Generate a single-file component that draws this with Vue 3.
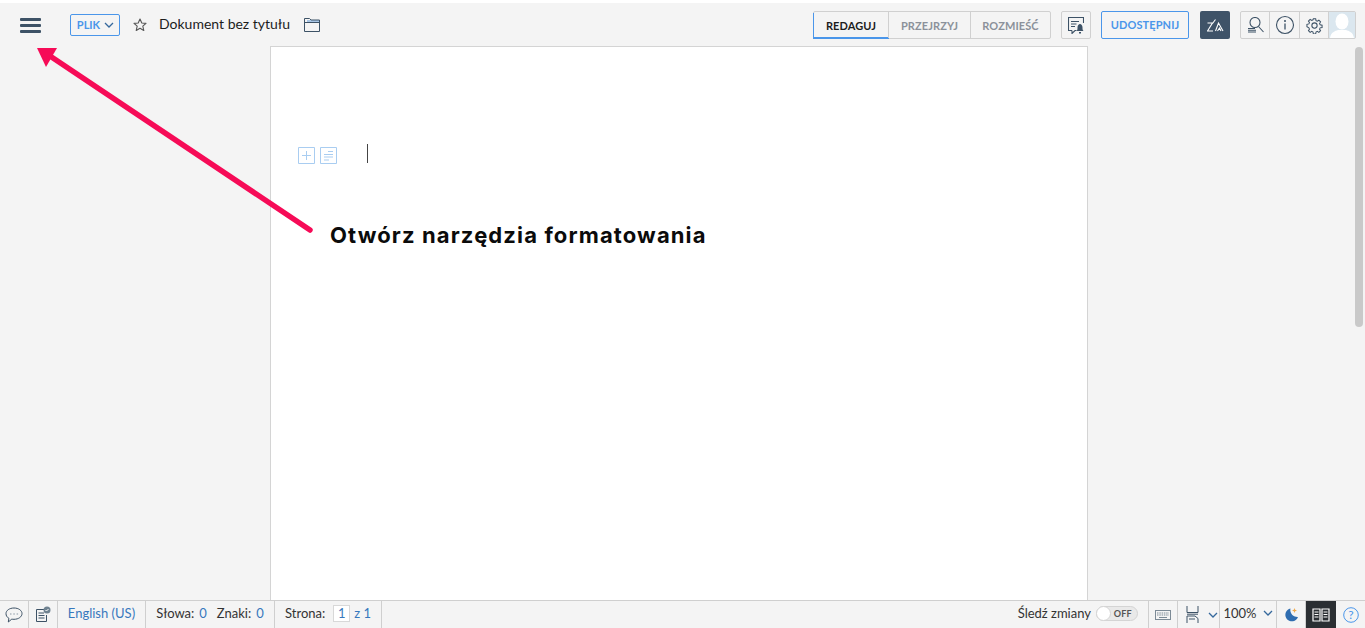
<script setup>
const tabs = [
  { label: 'REDAGUJ', w: 74, active: true },
  { label: 'PRZEJRZYJ', w: 82 },
  { label: 'ROZMIEŚĆ', w: 80 }
]
</script>

<template>
  <div class="app">
    <header class="toolbar">
      <button class="burger" aria-label="menu"><i></i><i></i><i></i></button>
      <button class="file"><span class="lift">PLIK</span>
        <svg width="10" height="6" viewBox="0 0 10 6"><path d="M1 1l4 4 4-4" fill="none" stroke="#35689c" stroke-width="1.3"/></svg>
      </button>
      <svg class="star" width="16" height="16" viewBox="0 0 16 16"><path d="M8 2l1.800 4 4.200.4-3.200 2.800 1 4.300L8 11.200l-3.800 2.300 1-4.300L2 6.400 6.200 6z" fill="none" stroke="#555" stroke-width="1.100" stroke-linejoin="round"/></svg>
      <span class="title">Dokument bez tytułu</span>
      <svg class="folder" width="16" height="14" viewBox="0 0 16 14"><rect x="3" y="2" width="12" height="2.500" fill="#a9c6e6"/><path d="M.5 13.500V.5h5l1.500 1.500h8.500v11.500zM.5 4.500h15" fill="none" stroke="#3d5266"/></svg>
      <div class="spacer"></div>
      <nav class="tabs">
        <span v-for="t in tabs" :key="t.label" class="tab" :class="{ active: t.active }" :style="{ width: t.w + 'px' }">{{ t.label }}</span>
      </nav>
      <button class="box" aria-label="powiadomienia">
        <svg width="16" height="17" viewBox="0 0 16 17"><path d="M4 13.500H.5V.5h15v5.500M4 13.500v3l3-3h1.500" fill="none" stroke="#3d5266" stroke-width="1.100"/><path d="M3 4.500h8M3 7h5.500M3 9.500h4" stroke="#3d5266"/><path d="M8.500 14c1-1 1-2 1-3.500C9.500 8.500 10.800 7 12 7s2.500 1.500 2.500 3.500c0 1.500 0 2.500 1 3.500zM11 15h2v1.500h-2z" fill="#3d5266"/></svg>
      </button>
      <button class="share"><span class="lift">UDOSTĘPNIJ</span></button>
      <button class="dark" aria-label="język">
        <svg width="17" height="13" viewBox="0 0 17 13"><path d="M.5 4h5L.5 12H6M5.500 4.500L8.500 .5M8.500 12l3-8 4.500 8M10.500 12l2-3 1.500 3" fill="none" stroke="#fff" stroke-width="1.100"/></svg>
      </button>
      <div class="group">
        <span class="cell c1"><svg width="17" height="16" viewBox="0 0 17 16"><circle cx="8" cy="5.500" r="5" fill="none" stroke="#3d5266" stroke-width="1.100"/><path d="M11.500 9.500l5 5.500M1 11.500h7M1 13.300h8M1 15h8" stroke="#3d5266" stroke-width="1.100"/></svg></span>
        <span class="cell c2"><svg width="20" height="20" viewBox="0 0 20 20"><circle cx="10" cy="10" r="8.500" fill="none" stroke="#3d5266" stroke-width="1.100"/><path d="M10 8.500v6" stroke="#3d5266" stroke-width="1.300"/><circle cx="10" cy="6" r="1" fill="#3d5266"/></svg></span>
        <span class="cell c3"><svg width="17" height="17" viewBox="0 0 18 18"><circle cx="9" cy="9" r="2.800" fill="none" stroke="#3d5266" stroke-width="1.100"/><path d="M7.600 1h2.800l.4 2.200 1.500.7 1.900-1.200 2 2-1.200 1.900.7 1.500 2.300.5v2.800l-2.300.4-.7 1.500 1.200 1.900-2 2-1.900-1.200-1.500.7-.4 2.300H7.600l-.4-2.300-1.500-.7-1.900 1.200-2-2 1.200-1.900-.7-1.500L0 10.400V7.600l2.300-.5.700-1.500L1.800 3.700l2-2 1.900 1.200 1.500-.7z" transform="translate(1 1) scale(.89)" fill="none" stroke="#3d5266" stroke-width="1.200"/></svg></span>
        <span class="cell avatar"><svg width="26" height="26" viewBox="0 0 26 26"><rect width="26" height="26" fill="#dbe7ef"/><ellipse cx="13" cy="9.500" rx="6.500" ry="8" fill="#fff"/><path d="M1 26c1-6 5-7 8-8h8c3 1 7 2 8 8z" fill="#fff"/></svg></span>
      </div>
    </header>

    <main class="workspace">
      <section class="page">
        <div class="page-tools">
          <span class="mini"><svg width="17" height="17" viewBox="0 0 17 17"><path d="M.5.500h16v16H.5zM8.500 4v9M4 8.500h9" fill="none" stroke="#a9cdf1"/></svg></span>
          <span class="mini"><svg width="17" height="17" viewBox="0 0 17 17"><path d="M.5.500h16v16H.5zM8 4.500h5M4 7.500h9M4 10h9M4 13h5" fill="none" stroke="#a9cdf1"/></svg></span>
          <span class="caret"></span>
        </div>
      </section>
    </main>

    <footer class="status">
      <span class="sc s-chat"><svg width="18" height="16" viewBox="0 0 18 16"><path d="M9 1c4.600 0 8 2.500 8 5.600S13.600 12.300 9 12.300c-.8 0-1.500 0-2.200-.2L3.300 15l.6-3.700C2 10.300 1 8.600 1 6.600 1 3.500 4.400 1 9 1z" fill="none" stroke="#3d5266"/><path d="M5 7h1.500M8.300 7h1.500M11.600 7h1.500" stroke="#8a98a5"/></svg></span>
      <span class="sc s-doc"><svg width="16" height="17" viewBox="0 0 16 17"><path d="M9 3.500H1.500v12h10V9" fill="none" stroke="#3d5266"/><path d="M3.500 7H9M3.500 9.500h6M3.500 12h6" stroke="#3d5266"/><circle cx="12" cy="4" r="3.500" fill="#6f8290"/><path d="M10.500 4l1 1 2-2" stroke="#fff" fill="none"/></svg></span>
      <span class="sc s-lang link up">English (US)</span>
      <span class="sc s-count up">Słowa:<b>0</b><em>Znaki:</em><b>0</b></span>
      <span class="sc s-page up">Strona:<span class="num">1</span><span class="link">z 1</span></span>
      <div class="spacer"></div>
      <span class="track up">Śledź zmiany
        <span class="toggle"><i></i>OFF</span>
      </span>
      <span class="sc s-kbd"><svg width="16" height="10" viewBox="0 0 16 10"><rect x=".5" y=".5" width="15" height="9" fill="none" stroke="#7c8a96"/><path d="M2 3h12M2 5h12" stroke="#7c8a96" stroke-dasharray="1.500 .8"/><path d="M4 7.500h8" stroke="#7c8a96"/></svg></span>
      <span class="sc s-view"><svg width="13" height="17" viewBox="0 0 13 17"><path d="M1 0v6.500h11V0M1 17v-7h8l3 2.500V17M1 8.200h11M3 13h6" fill="none" stroke="#3d5266"/></svg>
        <svg width="10" height="6" viewBox="0 0 10 6"><path d="M1 1l4 4 4-4" fill="none" stroke="#35689c" stroke-width="1.300"/></svg></span>
      <span class="sc s-zoom up">100%
        <svg width="10" height="6" viewBox="0 0 10 6"><path d="M1 1l4 4 4-4" fill="none" stroke="#35689c" stroke-width="1.300"/></svg></span>
      <span class="sc s-moon"><svg width="15" height="15" viewBox="0 0 15 15"><path d="M6.500 1.500A6.500 6.500 0 1 0 14 10 7 7 0 0 1 6.500 1.500z" fill="#2f6db0"/><path d="M10.500 1l.7 1.800 1.800.7-1.800.7-.7 1.800-.7-1.800L8 3.500l1.800-.7z" fill="#f0a94a"/></svg></span>
      <span class="s-read"><svg width="18" height="14" viewBox="0 0 18 14"><path d="M1 1h7v12H1zM10 1h7v12h-7z" fill="none" stroke="#fff" stroke-width="1.200"/><path d="M2.500 4h4M2.500 6.500h4M2.500 9h4M11.500 4h4M11.500 6.500h4M11.500 9h4" stroke="#fff"/></svg></span>
      <span class="s-help"><svg width="16" height="16" viewBox="0 0 16 16"><circle cx="8" cy="8" r="7.300" fill="none" stroke="#4a96ea"/><text x="8" y="12" text-anchor="middle" class="q">?</text></svg></span>
    </footer>

    <div class="scrollbar"></div>
    <svg class="arrow" width="320" height="240" viewBox="0 0 320 240">
      <path d="M310 230L50 56" stroke="#f60b57" stroke-width="5.500" stroke-linecap="round"/>
      <path d="M37 48H57L46 67z" fill="#f60b57"/>
    </svg>
    <p class="note">Otwórz narzędzia formatowania</p>
  </div>
</template>

<style>
html, body { margin: 0; background: #f4f4f4; }
</style>

<style scoped>
.app {
  position: relative;
  display: flex;
  flex-direction: column;
  height: 628px;
  width: 1365px;
  overflow: hidden;
  background: #f4f4f4;
  border-top: 3px solid #fff;
  box-sizing: border-box;
  font-family: Lato, "Liberation Sans", sans-serif;
  color: #222;
}
button { font-family: inherit; padding: 0; background: none; border: 0; cursor: pointer; }
.spacer { flex: 1; }
.lift { display: block; margin-top: -2px; }

.toolbar {
  display: flex;
  align-items: center;
  height: 43px;
  flex: none;
  padding: 1px 9px 0 20px;
  box-sizing: border-box;
}
.burger { width: 21px; height: 15px; display: flex; flex-direction: column; justify-content: space-between; margin: 1px 29px 0 0; }
.burger i { display: block; height: 3px; background: #3d5266; border-radius: 1px; }
.file {
  width: 50px; height: 22px; box-sizing: border-box;
  border: 1px solid #4a96ea; border-radius: 2px; color: #4a96ea;
  font-size: 11px; font-weight: 700;
  display: flex; align-items: center; justify-content: center; gap: 4px; padding-left: 1px;
}
.star { margin-left: 12px; }
.title { margin-left: 11px; font-size: 14px; color: #1c1c1c; margin-top: -3px; width: 131px; white-space: nowrap; }
.folder { margin-left: 14px; }

.tabs { display: flex; height: 28px; box-sizing: border-box; border: 1px solid #d0d0d0; border-radius: 2px; }
.tab {
  display: flex; align-items: center; justify-content: center;
  font-size: 11px; font-weight: 700; color: #8b919a;
  border-left: 1px solid #d0d0d0; box-sizing: border-box; letter-spacing: .1px;
}
.tab:first-child { border-left: 0; }
.tab.active { color: #1c1c1c; box-shadow: -1px 1px 0 #4a96ea, 1px 1px 0 #4a96ea, inset 0 -1px 0 #4a96ea; }
.box { width: 30px; height: 28px; box-sizing: border-box; border: 1px solid #d0d0d0; border-radius: 2px; margin-left: 10px; display: flex; align-items: center; justify-content: center; }
.share { width: 88px; height: 28px; box-sizing: border-box; border: 1px solid #4a96ea; border-radius: 2px; color: #4a96ea; font-size: 11px; font-weight: 700; margin-left: 10px; letter-spacing: .1px; }
.dark { width: 30px; height: 28px; background: #3f5368; border-radius: 2px; margin-left: 11px; display: flex; align-items: center; justify-content: center; }
.group { display: flex; height: 28px; box-sizing: border-box; border: 1px solid #d0d0d0; border-radius: 2px; margin-left: 10px; width: 116px; }
.cell { display: flex; align-items: center; justify-content: center; border-right: 1px solid #d0d0d0; box-sizing: border-box; height: 100%; }
.c1 { width: 29px; } .c2 { width: 30px; } .c3 { width: 29px; }
.avatar { border-right: 0; width: 26px; overflow: hidden; }
.cell svg { display: block; }

.workspace { flex: 1; min-height: 0; display: flex; justify-content: center; padding-right: 7px; overflow: hidden; }
.page { width: 818px; box-sizing: border-box; background: #fff; border: 1px solid #d4d4d4; border-bottom: 0; }
.page-tools { display: flex; align-items: center; padding: 100px 0 0 27px; height: 17px; gap: 5px; box-sizing: content-box; }
.mini { width: 17px; height: 17px; display: block; }
.mini svg { display: block; }
.caret { width: 1px; height: 19px; background: #444; margin: -5px 0 0 25px; }

.status {
  flex: none; height: 28px; box-sizing: border-box;
  border-top: 1px solid #cfcfcf;
  display: flex; align-items: stretch;
  font-size: 13px; color: #333;
  background: #f4f4f4;
}
.sc { display: flex; align-items: center; justify-content: center; border-right: 1px solid #cfcfcf; box-sizing: border-box; white-space: nowrap; }
.up { padding-bottom: 3px; }
.link { color: #3778bd; }
.s-chat { width: 29px; }
.s-doc { width: 29px; }
.s-lang { width: 88px; }
.s-count { width: 129px; }
.s-count b { font-weight: 400; color: #3778bd; margin-left: 5px; }
.s-count em { font-style: normal; margin-left: 10px; }
.s-page { width: 107px; }
.num { width: 17px; height: 17px; box-sizing: border-box; border: 1px solid #d8d8d8; background: #fff; color: #3778bd; display: inline-flex; align-items: center; justify-content: center; margin: 0 4px 0 8px; }
.track { display: flex; align-items: center; gap: 5px; margin-right: 10px; }
.toggle { width: 42px; height: 15px; box-sizing: border-box; border: 1px solid #d4d4d4; border-radius: 8px; background: #e9e9e9; font-size: 9px; font-weight: 700; color: #555; display: flex; align-items: center; justify-content: flex-end; padding-right: 5px; position: relative; letter-spacing: .3px; }
.toggle i { position: absolute; left: -1px; top: -1px; width: 15px; height: 15px; background: #fff; border-radius: 50%; border: 1px solid #d4d4d4; box-sizing: border-box; }
.s-kbd { width: 30px; border-left: 1px solid #cfcfcf; }
.s-view { width: 42px; gap: 9px; padding-left: 6px; }
.s-zoom { width: 57px; gap: 6px; font-size: 13px; }
.s-moon { width: 29px; }
.s-read { width: 30px; background: #2b2f33; display: flex; align-items: center; justify-content: center; }
.s-help { width: 29px; display: flex; align-items: center; justify-content: center; }
.q { font-family: Lato, sans-serif; font-size: 12px; fill: #4a96ea; }

.scrollbar { position: absolute; left: 1355px; top: 44px; width: 8px; height: 280px; border-radius: 4px; background: #c9c9c9; }
.arrow { position: absolute; left: 0; top: -3px; pointer-events: none; }
.note { position: absolute; left: 330px; top: 219px; margin: 0; font-family: Inter, sans-serif; font-weight: 700; font-size: 22px; color: #0b0b0b; letter-spacing: 1.13px; white-space: nowrap; }
</style>
